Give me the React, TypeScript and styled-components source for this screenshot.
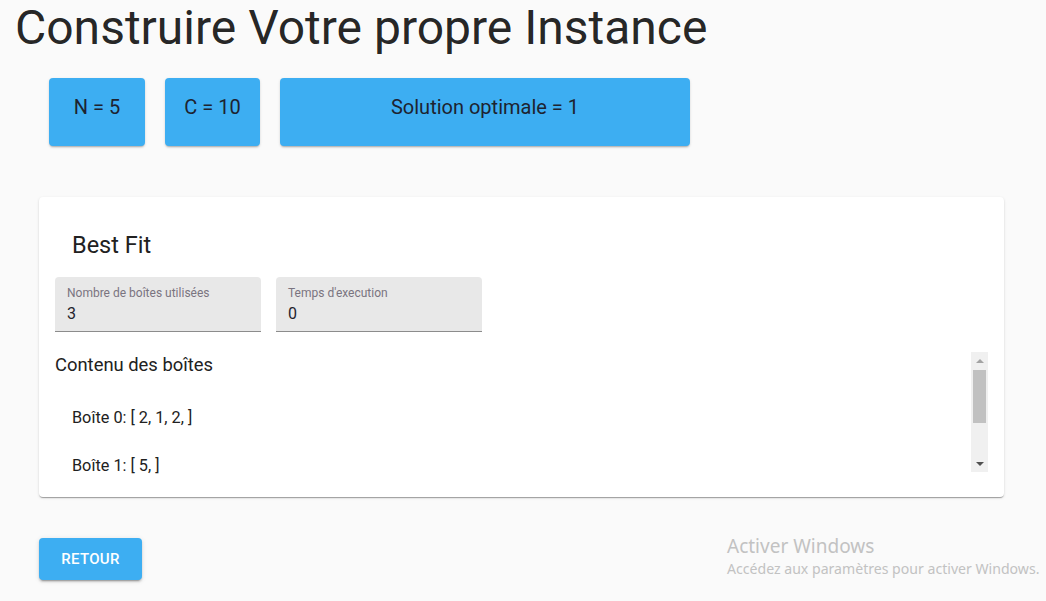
import styled, { createGlobalStyle } from 'styled-components';

const GlobalStyle = createGlobalStyle`
  html, body {
    margin: 0;
    padding: 0;
    background: #fafafa;
    font-family: Roboto, 'Liberation Sans', sans-serif;
    color: rgba(0, 0, 0, 0.87);
  }
`;

const Page = styled.div`
  position: relative;
  width: 1046px;
  height: 601px;
  overflow: hidden;
`;

const Title = styled.h1`
  margin: 0;
  padding: 0 0 0 15px;
  font-size: 48px;
  font-weight: 400;
  line-height: 56px;
`;

const ChipRow = styled.div`
  display: flex;
  gap: 20px;
  padding: 22px 0 0 49px;
`;

const Chip = styled.div<{ $width: number }>`
  width: ${(p) => p.$width}px;
  height: 68px;
  background: #3daef2;
  border-radius: 4px;
  box-shadow: 0 2px 2px -1px rgba(0, 0, 0, 0.25), 0 1px 3px rgba(0, 0, 0, 0.12);
  display: flex;
  align-items: center;
  justify-content: center;
  font-size: 20px;
  color: #1d2330;
  padding-bottom: 10px;
  box-sizing: border-box;
`;

const Card = styled.section`
  margin: 51px 0 0 39px;
  width: 965px;
  height: 300px;
  box-sizing: border-box;
  background: #fff;
  border-radius: 4px;
  box-shadow: 0 2px 1px -1px rgba(0, 0, 0, 0.2), 0 1px 1px 0 rgba(0, 0, 0, 0.14),
    0 1px 3px 0 rgba(0, 0, 0, 0.12);
  padding: 34px 16px 21px 16px;
  display: flex;
  flex-direction: column;
`;

const CardTitle = styled.h2`
  margin: 0 0 0 17px;
  font-size: 23.5px;
  font-weight: 400;
  line-height: 28px;
  color: #212121;
`;

const FieldRow = styled.div`
  display: flex;
  gap: 15px;
  margin-top: 18px;
`;

const Field = styled.div`
  width: 206px;
  height: 55px;
  box-sizing: border-box;
  background: #e8e8e8;
  border-radius: 4px 4px 0 0;
  border-bottom: 1px solid #8c8c8c;
  padding: 9px 12px 0 12px;
  display: flex;
  flex-direction: column;
`;

const FieldLabel = styled.span`
  font-size: 12px;
  line-height: 14px;
  color: #7a7480;
`;

const FieldValue = styled.span`
  margin-top: 4px;
  font-size: 16px;
  line-height: 19px;
  color: #23232d;
`;

const ScrollBox = styled.div`
  display: flex;
  align-items: flex-start;
  height: 124px;
  margin-top: 20px;
`;

const ScrollContent = styled.div`
  flex: 1;
  height: 100%;
  overflow: hidden;
`;

const SectionTitle = styled.div`
  font-size: 18.4px;
  line-height: 26px;
  color: #212121;
`;

const List = styled.ul`
  list-style: none;
  margin: 0;
  padding: 15px 0 0;
`;

const ListItem = styled.li`
  height: 48px;
  display: flex;
  align-items: center;
  padding-left: 17px;
  font-size: 16.25px;
  color: #212121;
`;

const Scrollbar = styled.div`
  width: 17px;
  height: 120px;
  background: #f0f0f0;
  display: flex;
  flex-direction: column;
  align-items: center;
`;

const ScrollArrow = styled.div<{ $down?: boolean }>`
  height: 17px;
  width: 17px;
  display: flex;
  align-items: center;
  justify-content: center;
  &::after {
    content: '';
    width: 0;
    height: 0;
    border-left: 4px solid transparent;
    border-right: 4px solid transparent;
    ${(p) =>
      p.$down
        ? 'border-top: 4px solid #505050;'
        : 'border-bottom: 4px solid #a3a3a3;'}
  }
`;

const Thumb = styled.div`
  width: 13px;
  height: 53px;
  margin-top: 1px;
  background: #c1c1c1;
`;

const Track = styled.div`
  flex: 1;
`;

const Footer = styled.div`
  padding: 41px 0 0 39px;
`;

const BackButton = styled.button`
  width: 103px;
  height: 42px;
  border: none;
  border-radius: 4px;
  background: #3daef2;
  color: #fff;
  font-family: Roboto, 'Liberation Sans', sans-serif;
  font-size: 15px;
  font-weight: 500;
  letter-spacing: 0.3px;
  text-transform: uppercase;
  box-shadow: 0 3px 1px -2px rgba(0, 0, 0, 0.2), 0 2px 2px 0 rgba(0, 0, 0, 0.14),
    0 1px 5px 0 rgba(0, 0, 0, 0.12);
  cursor: pointer;
`;

const Watermark = styled.div`
  position: absolute;
  left: 727px;
  top: 534px;
  font-family: 'Noto Sans', 'Open Sans', sans-serif;
  color: #c2c2c2;
`;

const WatermarkTitle = styled.div`
  font-size: 19px;
  line-height: 24px;
`;

const WatermarkText = styled.div`
  margin-top: 1px;
  font-size: 14.1px;
  line-height: 19px;
`;

const boxes = ['Boîte 0: [ 2, 1, 2, ]', 'Boîte 1: [ 5, ]'];

export default function App() {
  return (
    <Page>
      <GlobalStyle />
      <Title>Construire Votre propre Instance</Title>
      <ChipRow>
        <Chip $width={96}>N = 5</Chip>
        <Chip $width={95}>C = 10</Chip>
        <Chip $width={410}>Solution optimale = 1</Chip>
      </ChipRow>
      <Card>
        <CardTitle>Best Fit</CardTitle>
        <FieldRow>
          <Field>
            <FieldLabel>Nombre de boîtes utilisées</FieldLabel>
            <FieldValue>3</FieldValue>
          </Field>
          <Field>
            <FieldLabel>Temps d'execution</FieldLabel>
            <FieldValue>0</FieldValue>
          </Field>
        </FieldRow>
        <ScrollBox>
          <ScrollContent>
            <SectionTitle>Contenu des boîtes</SectionTitle>
            <List>
              {boxes.map((b) => (
                <ListItem key={b}>{b}</ListItem>
              ))}
            </List>
          </ScrollContent>
          <Scrollbar>
            <ScrollArrow />
            <Thumb />
            <Track />
            <ScrollArrow $down />
          </Scrollbar>
        </ScrollBox>
      </Card>
      <Footer>
        <BackButton>Retour</BackButton>
      </Footer>
      <Watermark>
        <WatermarkTitle>Activer Windows</WatermarkTitle>
        <WatermarkText>Accédez aux paramètres pour activer Windows.</WatermarkText>
      </Watermark>
    </Page>
  );
}
